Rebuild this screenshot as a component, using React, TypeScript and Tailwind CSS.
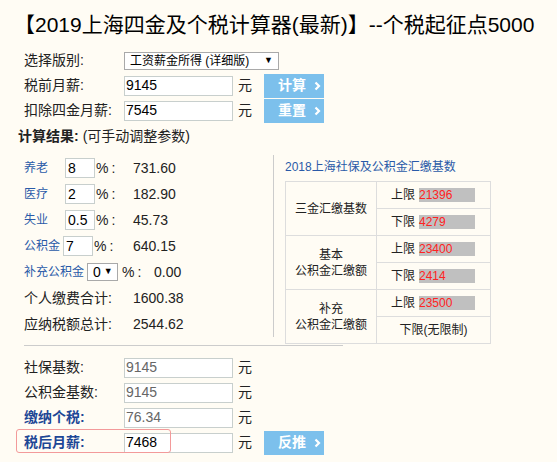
import React from "react";

function Chevron() {
  return (
    <svg width="7" height="10" viewBox="0 0 7 10" className="ml-[8px]">
      <polyline points="1.5,1.5 5,5 1.5,8.5" fill="none" stroke="white" strokeWidth="2.2" />
    </svg>
  );
}

function Btn({ children }: { children: React.ReactNode }) {
  return (
    <div className="ml-[12px] flex h-[24px] w-[60px] items-center bg-[#7cc0ec] pl-[14px] text-[14px] font-bold text-white">
      <span>{children}</span>
      <Chevron />
    </div>
  );
}

function Box({ v, w = "w-[109px]", gray = false }: { v: string; w?: string; gray?: boolean }) {
  return (
    <div
      className={`${w} flex h-[20px] items-center border border-[#c8cfcd] bg-white pl-[1px] text-[14px] ${gray ? "text-[#666]" : "text-black"}`}
    >
      {v}
    </div>
  );
}

function SmallBox({ v, w }: { v: string; w: string }) {
  return (
    <div className={`${w} flex h-[20px] items-center border border-[#c8cfcd] bg-white pl-[2px] text-[14px] text-black`}>
      {v}
    </div>
  );
}

function Pct() {
  return (
    <span className="ml-[1px] flex text-[14px]">
      <span>%</span>
      <span className="ml-[3px]">:</span>
    </span>
  );
}

function RateRow({ label, lw, v, amt }: { label: string; lw: string; v: string; amt: string }) {
  return (
    <div className="flex h-[26px] items-center">
      <div className="flex w-[109px] items-center">
        <span className={`${lw} text-[12px] text-[#2a5aa8]`}>{label}</span>
        <SmallBox v={v} w="w-[30px]" />
        <Pct />
      </div>
      <span className="text-[14px]">{amt}</span>
    </div>
  );
}

function Limit({ k, v }: { k: string; v: string }) {
  return (
    <div className="flex items-center pl-[14px]">
      <span className="w-[28px]">{k}</span>
      <span className="flex h-[14px] w-[56px] items-center bg-[#c0c0c0] text-[#ff2222]">{v}</span>
    </div>
  );
}

export default function App() {
  const td = "border border-[#dddddd] h-[27px] p-0";
  return (
    <div className="h-[462px] w-[557px] overflow-hidden bg-[#fffcf4] font-['Liberation_Sans','Noto_Sans_CJK_SC',sans-serif] text-[#222]">
      <h1 className="h-[48px] whitespace-nowrap pl-[14px] pt-[12px] text-[21px] font-normal leading-[26px] text-black">
        【2019上海四金及个税计算器(最新)】--个税起征点5000
      </h1>

      <div className="flex h-[25px] items-center pl-[24px] text-[14px]">
        <span className="w-[100px]">选择版别:</span>
        <div className="flex h-[18px] w-[155px] items-center justify-between border border-[#a9a9a9] bg-white pl-[5px] pr-[5px] text-[12px] text-black">
          <span>工资薪金所得 (详细版)</span>
          <span className="text-[9px]">▼</span>
        </div>
      </div>
      <div className="flex h-[25px] items-center pl-[24px] text-[14px]">
        <span className="w-[100px]">税前月薪:</span>
        <Box v="9145" />
        <span className="ml-[5px]">元</span>
        <Btn>计算</Btn>
      </div>
      <div className="flex h-[25px] items-center pl-[24px] text-[14px]">
        <span className="w-[100px]">扣除四金月薪:</span>
        <Box v="7545" />
        <span className="ml-[5px]">元</span>
        <Btn>重置</Btn>
      </div>

      <div className="flex h-[26px] items-center pl-[18px] text-[14px]">
        <span className="font-bold">计算结果:</span>
        <span className="ml-[4px]">(可手动调整参数)</span>
      </div>

      <div className="flex h-[196px] pl-[24px]">
        <div className="mt-[6px] h-[182px] w-[250px] border-r border-[#cccccc]">
          <RateRow label="养老" lw="w-[41px]" v="8" amt="731.60" />
          <RateRow label="医疗" lw="w-[41px]" v="2" amt="182.90" />
          <RateRow label="失业" lw="w-[41px]" v="0.5" amt="45.73" />
          <RateRow label="公积金" lw="w-[39px]" v="7" amt="640.15" />
          <div className="flex h-[26px] items-center">
            <span className="w-[63px] text-[12px] text-[#2a5aa8]">补充公积金</span>
            <div className="flex h-[18px] w-[31px] items-center border border-[#a9a9a9] bg-white pl-[5px] text-[14px] text-black">
              <span>0</span>
              <span className="ml-[3px] text-[9px]">▼</span>
            </div>
            <span className="ml-[4px] flex w-[32px] text-[14px]">
              <span>%</span>
              <span className="ml-[3px]">:</span>
            </span>
            <span className="text-[14px]">0.00</span>
          </div>
          <div className="flex h-[26px] items-center text-[14px]">
            <span className="w-[109px]">个人缴费合计:</span>
            <span>1600.38</span>
          </div>
          <div className="flex h-[26px] items-center text-[14px]">
            <span className="w-[109px]">应纳税额总计:</span>
            <span>2544.62</span>
          </div>
        </div>

        <div className="pl-[11px] pt-[10px]">
          <div className="text-[12px] leading-[16px] text-[#2a5aa8]">2018上海社保及公积金汇缴基数</div>
          <table className="mt-[6px] border-collapse text-[12px] leading-[16px] text-[#222]">
            <tbody>
              <tr>
                <td rowSpan={2} className={`${td} w-[91px] text-center`}>三金汇缴基数</td>
                <td className={`${td} w-[114px]`}><Limit k="上限" v="21396" /></td>
              </tr>
              <tr>
                <td className={td}><Limit k="下限" v="4279" /></td>
              </tr>
              <tr>
                <td rowSpan={2} className={`${td} text-center`}>基本<br />公积金汇缴额</td>
                <td className={td}><Limit k="上限" v="23400" /></td>
              </tr>
              <tr>
                <td className={td}><Limit k="下限" v="2414" /></td>
              </tr>
              <tr>
                <td rowSpan={2} className={`${td} text-center`}>补充<br />公积金汇缴额</td>
                <td className={td}><Limit k="上限" v="23500" /></td>
              </tr>
              <tr>
                <td className={`${td} text-center`}>下限(无限制)</td>
              </tr>
            </tbody>
          </table>
        </div>
      </div>

      <div className="ml-[24px] w-[319px] border-t border-[#cccccc]" />

      <div className="pt-[9px] text-[14px]">
        <div className="flex h-[25px] items-center pl-[24px]">
          <span className="w-[100px]">社保基数:</span>
          <Box v="9145" gray />
          <span className="ml-[5px]">元</span>
        </div>
        <div className="flex h-[25px] items-center pl-[24px]">
          <span className="w-[100px]">公积金基数:</span>
          <Box v="9145" gray />
          <span className="ml-[5px]">元</span>
        </div>
        <div className="flex h-[25px] items-center pl-[24px]">
          <span className="w-[100px] font-bold text-[#1d4796]">缴纳个税:</span>
          <Box v="76.34" gray />
          <span className="ml-[5px]">元</span>
        </div>
        <div className="relative flex h-[25px] items-center pl-[24px]">
          <span className="w-[100px] font-bold text-[#1d4796]">税后月薪:</span>
          <Box v="7468" />
          <span className="ml-[5px]">元</span>
          <Btn>反推</Btn>
          <div className="absolute left-[16px] top-[-1px] h-[24px] w-[155px] rounded-[3px] border border-[#f39a9a]" />
        </div>
      </div>
    </div>
  );
}
